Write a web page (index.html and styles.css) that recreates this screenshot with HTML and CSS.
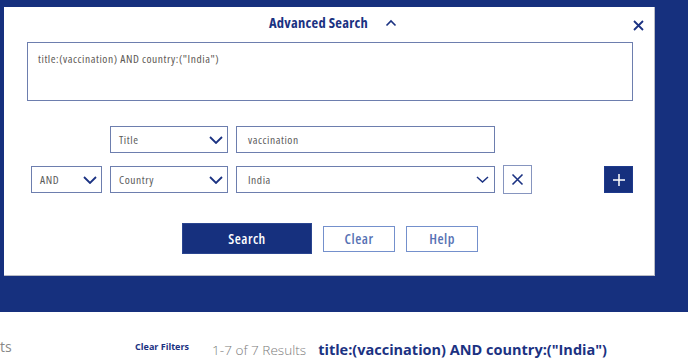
FILE: index.html
```html
<!DOCTYPE html>
<html lang="en">
<head>
  <meta charset="UTF-8">
  <title>Advanced Search</title>
  <link rel="stylesheet" href="styles.css">
</head>
<body>
  <div class="hero">
    <div class="panel">
      <div class="panel-head">
        <div class="panel-title">
          Advanced Search
          <svg class="caret-up" width="12" height="8" viewBox="0 0 12 8"><path d="M1.5 6.5 L6 2 L10.5 6.5" fill="none" stroke="#1b3282" stroke-width="1.6"/></svg>
        </div>
        <button class="close-btn" aria-label="Close">
          <svg width="11" height="11" viewBox="0 0 11 11"><path d="M1 1 L10 10 M10 1 L1 10" stroke="#1b3282" stroke-width="1.8"/></svg>
        </button>
      </div>

      <div class="query-box">title:(vaccination) AND country:("India")</div>

      <div class="rows">
        <div class="row">
          <div class="slot-op"></div>
          <div class="field select w-field">Title
            <svg class="chev" width="14" height="8" viewBox="0 0 14 8"><path d="M1 1 L7 7 L13 1" fill="none" stroke="#1b3282" stroke-width="1.8"/></svg>
          </div>
          <div class="field w-value">vaccination</div>
        </div>
        <div class="row">
          <div class="field select slot-op">AND
            <svg class="chev" width="14" height="8" viewBox="0 0 14 8"><path d="M1 1 L7 7 L13 1" fill="none" stroke="#1b3282" stroke-width="1.8"/></svg>
          </div>
          <div class="field select w-field">Country
            <svg class="chev" width="14" height="8" viewBox="0 0 14 8"><path d="M1 1 L7 7 L13 1" fill="none" stroke="#1b3282" stroke-width="1.8"/></svg>
          </div>
          <div class="field select w-value">India
            <svg class="chev small" width="13" height="7" viewBox="0 0 13 7"><path d="M1 1 L6.5 6 L12 1" fill="none" stroke="#1b3282" stroke-width="1.5"/></svg>
          </div>
          <button class="icon-btn remove" aria-label="Remove">
            <svg width="13" height="13" viewBox="0 0 13 13"><path d="M1.5 1.5 L11.5 11.5 M11.5 1.5 L1.5 11.5" stroke="#1b3282" stroke-width="1.6"/></svg>
          </button>
          <button class="icon-btn add" aria-label="Add">
            <svg width="14" height="14" viewBox="0 0 14 14"><path d="M7 1 V13 M1 7 H13" stroke="#ffffff" stroke-width="1.5"/></svg>
          </button>
        </div>
      </div>

      <div class="actions">
        <button class="btn primary">Search</button>
        <button class="btn outline">Clear</button>
        <button class="btn outline">Help</button>
      </div>
    </div>
  </div>

  <div class="results-bar">
    <div class="filters-head">
      <span class="filters-label">ts</span>
      <a class="clear-filters" href="#">Clear Filters</a>
    </div>
    <div class="results-count">
      <span class="count">1-7 of 7 Results</span>
      <span class="query">title:(vaccination) AND country:("India")</span>
    </div>
  </div>
</body>
</html>
```

FILE: styles.css
```css
:root {
  --navy: #16307e;
  --ink: #1b3282;
  --field-border: #6d7eae;
  --soft-border: #7490cc;
}

html, body {
  margin: 0;
  padding: 0;
  font-family: 'Open Sans', sans-serif;
  background: #ffffff;
  overflow: hidden;
}

.hero {
  background: var(--navy);
  padding: 7px 33px 36px 4px;
}

/* the dialog uses the semi-condensed cut */
.panel {
  font-stretch: 87.5%;
  background: #ffffff;
  height: 269px;
  box-sizing: border-box;
  border-right: 1px solid #b9bcc6;
  border-bottom: 1px solid #b9bcc6;
  position: relative;
}

.panel-head {
  height: 35px;
  display: flex;
  justify-content: center;
  align-items: center;
}

.panel-title {
  font-size: 14.5px;
  letter-spacing: 0.25px;
  font-weight: 700;
  color: var(--ink);
  display: flex;
  align-items: center;
  gap: 17px;
  margin-left: 8px;
  margin-top: -5px;
}

.caret-up {
  margin-top: 1px;
}

.close-btn {
  position: absolute;
  top: 13px;
  right: 10px;
  background: none;
  border: none;
  padding: 0;
  width: 11px;
  height: 11px;
  display: flex;
  align-items: center;
  justify-content: center;
}

.query-box {
  margin-left: 23px;
  width: 606px;
  height: 59px;
  box-sizing: border-box;
  border: 1px solid var(--field-border);
  padding: 8px 10px;
  font-size: 11.5px;
  letter-spacing: 0.55px;
  color: #5e5a55;
}

.rows {
  margin-top: 25px;
  padding-left: 27px;
  display: flex;
  flex-direction: column;
  gap: 13px;
}

.row {
  display: flex;
  align-items: center;
  height: 27px;
}

.field {
  height: 27px;
  box-sizing: border-box;
  border: 1px solid var(--field-border);
  display: flex;
  align-items: center;
  padding: 0 8px;
  font-size: 11.5px;
  letter-spacing: 0.55px;
  color: #5c5c5c;
}

.select {
  justify-content: space-between;
  padding-right: 4px;
}

.slot-op {
  width: 71px;
  margin-right: 8px;
}

.w-field {
  width: 118px;
  margin-right: 8px;
}

.w-value {
  width: 259px;
  padding-left: 11px;
}

.chev.small {
  margin-right: 1px;
}

.icon-btn {
  width: 29px;
  height: 29px;
  box-sizing: border-box;
  padding: 0;
  display: flex;
  align-items: center;
  justify-content: center;
  background: #ffffff;
  border: 1px solid #8695bf;
}

.remove {
  margin-left: 8px;
}

.add {
  margin-left: 72px;
  height: 27px;
  width: 29px;
  background: var(--navy);
  border-color: #1e3a8c;
}

.actions {
  margin-top: 30px;
  display: flex;
  align-items: center;
  padding-left: 178px;
  gap: 11px;
}

.btn {
  font-family: inherit;
  font-stretch: 87.5%;
  font-size: 14px;
  letter-spacing: 0.5px;
  font-weight: 600;
  box-sizing: border-box;
  cursor: pointer;
}

.primary {
  width: 130px;
  height: 31px;
  background: var(--navy);
  color: #ffffff;
  border: 1px solid #2a4590;
}

.outline {
  width: 72px;
  height: 26px;
  background: #ffffff;
  color: #5672b4;
  border: 1.5px solid var(--soft-border);
}

.results-bar {
  display: flex;
  align-items: flex-start;
  padding-top: 28px;
}

.filters-head {
  width: 190px;
  margin-top: -3px;
  display: flex;
  justify-content: space-between;
  align-items: center;
  position: relative;
}

.filters-head::after {
  content: "";
  position: absolute;
  left: 0;
  top: 25px;
  width: 143px;
  height: 2px;
  background: #eeeeee;
}

.filters-label {
  font-size: 14px;
  color: #888888;
}

.clear-filters {
  font-size: 9px;
  font-weight: 700;
  color: var(--ink);
  text-decoration: none;
  margin-right: 1px;
}

.results-count {
  margin-left: 22px;
  display: flex;
  align-items: baseline;
  gap: 12px;
  white-space: nowrap;
}

.count {
  font-size: 13.6px;
  font-weight: 300;
  color: #7c7c7c;
}

.query {
  font-size: 14.5px;
  font-weight: 700;
  color: var(--ink);
}
```
